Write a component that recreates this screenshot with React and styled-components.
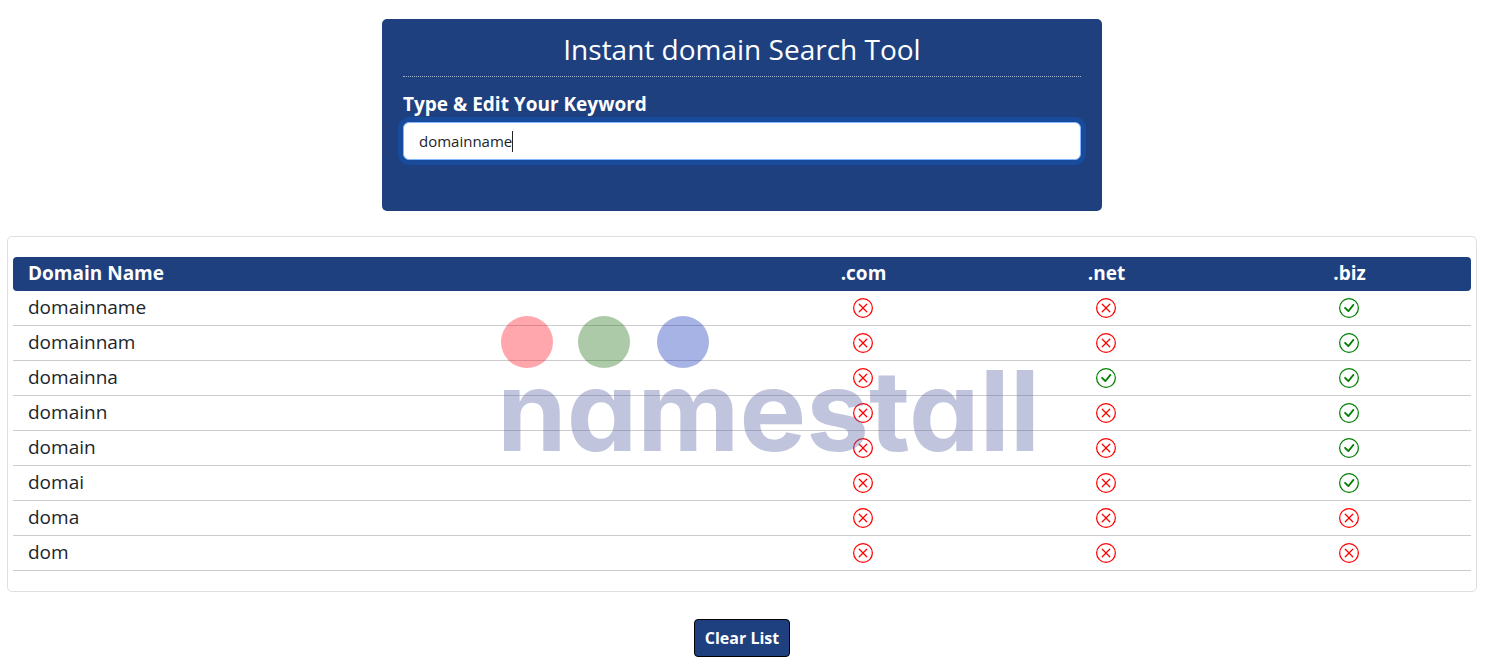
import React, { useLayoutEffect, useState } from 'react'
import styled, { createGlobalStyle } from 'styled-components'
import { BsCheckCircle, BsXCircle } from 'react-icons/bs'

const extensions = ['.com', '.net', '.biz']

const initialDomains = [
    { name: 'domainname', free: ['.biz'] },
    { name: 'domainnam', free: ['.biz'] },
    { name: 'domainna', free: ['.net', '.biz'] },
    { name: 'domainn', free: ['.biz'] },
    { name: 'domain', free: ['.biz'] },
    { name: 'domai', free: ['.biz'] },
    { name: 'doma', free: [] },
    { name: 'dom', free: [] },
]

function Watermark() {
    return (
        <WatermarkStyled aria-hidden="true">
            <svg width="534" height="166" viewBox="0 0 534 166">
                <circle cx="27" cy="26" r="26" fill="#ff0615" />
                <circle cx="104" cy="26" r="26" fill="#186a09" />
                <circle cx="183" cy="26" r="26" fill="#0629b5" />
                <text x="-3" y="135">namestall</text>
            </svg>
        </WatermarkStyled>
    )
}

function KeywordField({ value, onChange }) {
    const [caret, setCaret] = useState(0)

    // the caret sits right after the last typed letter
    useLayoutEffect(() => {
        const ctx = document.createElement('canvas').getContext('2d')
        ctx.font = "15px 'Open Sans'"
        setCaret(Math.round(ctx.measureText(value).width))
    }, [value])

    return (
        <Field>
            <KeywordInput
                id="keyword"
                type="text"
                autoFocus
                autoComplete="off"
                spellCheck={false}
                value={value}
                onChange={(e) => onChange(e.target.value)}
            />
            <Caret style={{ left: 16 + caret }} />
        </Field>
    )
}

function App() {
    const [keyword, setKeyword] = useState('domainname')
    const [domains, setDomains] = useState(initialDomains)

    return (
        <Page>
            <GlobalStyle />
            <SearchBox>
                <Title>Instant domain Search Tool</Title>
                <Label htmlFor="keyword">Type &amp; Edit Your Keyword</Label>
                <KeywordField value={keyword} onChange={setKeyword} />
            </SearchBox>
            <ResultPanel>
                <ResultTable>
                    <thead>
                        <tr>
                            <HeadCell $wide>Domain Name</HeadCell>
                            {extensions.map((ext) => (
                                <HeadCell key={ext}>{ext}</HeadCell>
                            ))}
                        </tr>
                    </thead>
                    <tbody>
                        {domains.map((domain) => (
                            <tr key={domain.name}>
                                <Cell $wide>{domain.name}</Cell>
                                {extensions.map((ext) => {
                                    const free = domain.free.includes(ext)
                                    return (
                                        <Cell key={ext}>
                                            <Status $free={free}>
                                                {free ? <BsCheckCircle /> : <BsXCircle />}
                                            </Status>
                                        </Cell>
                                    )
                                })}
                            </tr>
                        ))}
                    </tbody>
                </ResultTable>
                <Watermark />
            </ResultPanel>
            <ClearButton type="button" onClick={() => setDomains([])}>Clear List</ClearButton>
        </Page>
    )
}

const GlobalStyle = createGlobalStyle`
  * {
    box-sizing: border-box;
  }

  body {
    margin: 0;
    background: #fff;
    color: #212529;
    font-family: 'Open Sans', 'Noto Sans', sans-serif;
  }
`;

const Page = styled.main`
  display: flex;
  flex-direction: column;
  align-items: center;
  padding: 19px 12px 2px 7px;
`;

const SearchBox = styled.section`
  width: 100%;
  max-width: 720px;
  display: flex;
  flex-direction: column;
  padding: 10px 21px 51px;
  background: #1e407f;
  border-radius: 5px;
  color: #fff;
`;

const Title = styled.h1`
  margin: 0 0 12px;
  padding-bottom: 6px;
  border-bottom: 1px dotted #a5b3cc;
  font-size: 28px;
  font-weight: 400;
  line-height: 41px;
  text-align: center;
`;

const Label = styled.label`
  padding-bottom: 2px;
  font-size: 19px;
  font-weight: 700;
  line-height: 31px;
`;

const Field = styled.div`
  position: relative;
`;

const KeywordInput = styled.input`
  display: block;
  width: 100%;
  height: 38px;
  padding: 0 15px;
  background: #fff;
  border: 1px solid #86b7fe;
  border-radius: 6px;
  color: #212529;
  caret-color: transparent;
  font-family: inherit;
  font-size: 15px;
  outline: none;
  box-shadow: 0 0 0 5px #194b9c;
`;

const Caret = styled.span`
  position: absolute;
  top: 9px;
  width: 1px;
  height: 21px;
  background: #212529;
  pointer-events: none;
`;

const ResultPanel = styled.section`
  position: relative;
  width: 100%;
  margin: 25px 0 27px;
  padding: 20px 5px;
  border: 1px solid #dfdfdf;
  border-radius: 5px;
`;

const ResultTable = styled.table`
  width: 100%;
  table-layout: fixed;
  border-collapse: separate;
  border-spacing: 0;
`;

const HeadCell = styled.th`
  width: ${({ $wide }) => ($wide ? '50%' : 'auto')};
  height: 34px;
  padding: 0 15px 2px;
  background: #1e407f;
  color: #fff;
  font-size: 19px;
  font-weight: 700;
  line-height: 31px;
  text-align: ${({ $wide }) => ($wide ? 'left' : 'center')};

  &:first-child {
    border-radius: 4px 0 0 4px;
  }

  &:last-child {
    border-radius: 0 4px 4px 0;
  }
`;

const Cell = styled.td`
  height: 35px;
  padding: ${({ $wide }) => ($wide ? '0 17px 2px 15px' : '0 17px 0 15px')};
  border-bottom: 1px solid #ccc;
  font-size: 19px;
  line-height: 31px;
  text-align: ${({ $wide }) => ($wide ? 'left' : 'center')};
`;

const Status = styled.span`
  display: flex;
  justify-content: center;
  font-size: 20px;
  color: ${({ $free }) => ($free ? 'green' : 'red')};
`;

const WatermarkStyled = styled.div`
  position: absolute;
  inset: 0;
  display: flex;
  justify-content: center;
  align-items: center;
  padding-left: 50px;
  padding-bottom: 30px;
  opacity: 0.35;
  pointer-events: none;

  svg {
    overflow: visible;
  }

  /* cv11 is the single-storey a */
  text {
    fill: #4e599e;
    font-family: Inter, sans-serif;
    font-feature-settings: 'cv11';
    font-size: 112px;
    font-weight: 700;
  }
`;

const ClearButton = styled.button`
  height: 38px;
  padding: 0 10px;
  background: #1e407f;
  border: 1px solid #000;
  border-radius: 4px;
  color: #fff;
  font-family: inherit;
  font-size: 16px;
  font-weight: 700;
  cursor: pointer;
`;

export default App
